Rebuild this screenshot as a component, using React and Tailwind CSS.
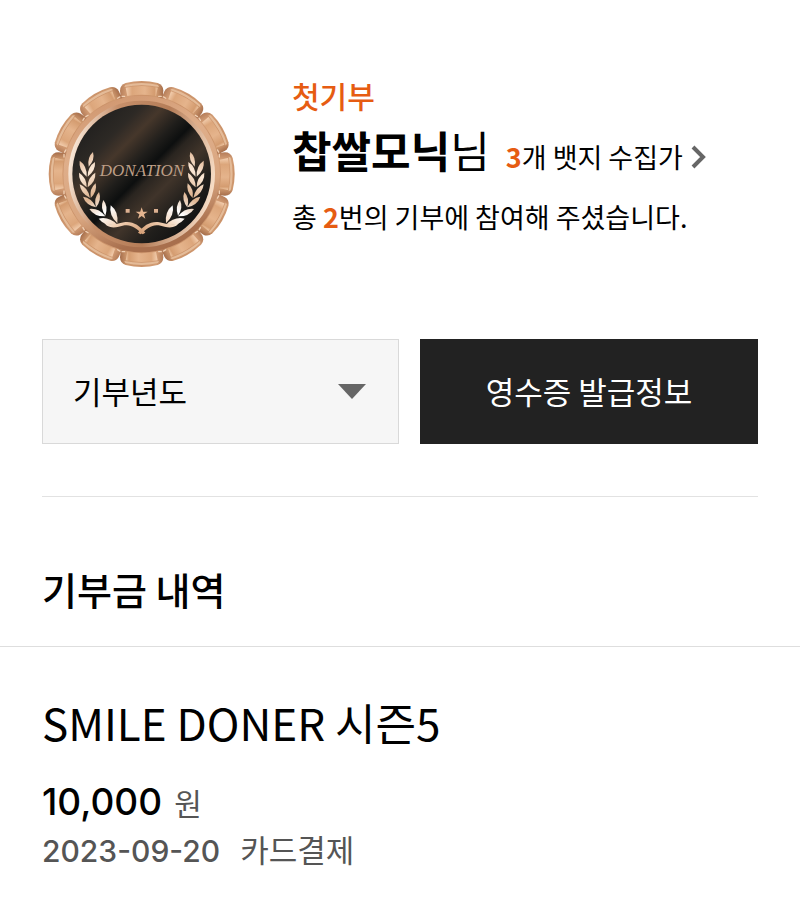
// App.jsx
import React from 'react';

// [base x, base y, tip x, tip y] for the left half of the laurel
const leaves = [
  [146, 290, 159, 246],
  [140, 320, 119, 272],
  [143, 320, 165, 276],
  [140, 352, 117, 308],
  [143, 352, 166, 308],
  [150, 384, 119, 343],
  [152, 384, 167, 340],
  [168, 412, 129, 380],
  [168, 412, 177, 366],
  [196, 439, 148, 417],
  [196, 437, 190, 390],
  [232, 464, 176, 446],
  [232, 460, 212, 406],
];

function leafPath([bx, by, tx, ty]) {
  const dx = tx - bx;
  const dy = ty - by;
  const mx = bx + dx * 0.55;
  const my = by + dy * 0.55;
  const nx = -dy * 0.28;
  const ny = dx * 0.28;
  return `M${bx} ${by}Q${mx + nx} ${my + ny} ${tx} ${ty}Q${mx - nx} ${my - ny} ${bx} ${by}Z`;
}

function Laurel() {
  return (
    <g fill="url(#leaf)">
      {leaves.map((leaf, i) => (
        <path key={i} d={leafPath(leaf)} />
      ))}
      <path d="M190 454C208 470 226 462 252 457C278 453 298 466 316 488L308 493C288 474 274 463 254 466C226 474 202 478 190 454Z" />
    </g>
  );
}

const angles = [0, 30, 60, 90, 120, 150, 180, 210, 240, 270, 300, 330];

function Badge() {
  return (
    <svg viewBox="24 24 564 576" className="w-[188px] h-[192px] shrink-0" role="img" aria-label="DONATION">
      <defs>
        <linearGradient id="lobe" x1="0" x2="1" y1="0" y2="0">
          <stop offset="0" stopColor="#b57d59" />
          <stop offset="0.16" stopColor="#d39d75" />
          <stop offset="0.5" stopColor="#cb9269" />
          <stop offset="0.84" stopColor="#cf996f" />
          <stop offset="1" stopColor="#a66e4b" />
        </linearGradient>
        <linearGradient id="panel" x1="0" x2="1" y1="0" y2="0">
          <stop offset="0" stopColor="#f3cfb0" />
          <stop offset="0.2" stopColor="#dca67b" />
          <stop offset="0.6" stopColor="#e5b48c" />
          <stop offset="0.9" stopColor="#d49c70" />
          <stop offset="1" stopColor="#efc8a5" />
        </linearGradient>
        <linearGradient id="rim" x1="0" x2="0.3" y1="0" y2="1">
          <stop offset="0" stopColor="#cc9169" />
          <stop offset="0.4" stopColor="#dfae8a" />
          <stop offset="0.75" stopColor="#d9a680" />
          <stop offset="1" stopColor="#a86f4d" />
        </linearGradient>
        <linearGradient id="bevel" x1="0" x2="1" y1="0.4" y2="0.6">
          <stop offset="0" stopColor="#f7e5d5" />
          <stop offset="0.25" stopColor="#c68f6a" />
          <stop offset="0.6" stopColor="#b57d58" />
          <stop offset="1" stopColor="#f6dcc5" />
        </linearGradient>
        <linearGradient id="face" gradientUnits="userSpaceOnUse" x1="163" y1="168" x2="451" y2="456">
          <stop offset="0" stopColor="#242220" />
          <stop offset="0.14" stopColor="#2d2925" />
          <stop offset="0.26" stopColor="#46372b" />
          <stop offset="0.4" stopColor="#211f1c" />
          <stop offset="0.5" stopColor="#0d0f0f" />
          <stop offset="0.56" stopColor="#2a2520" />
          <stop offset="0.68" stopColor="#40342a" />
          <stop offset="0.85" stopColor="#211f1c" />
          <stop offset="1" stopColor="#141414" />
        </linearGradient>
        <linearGradient id="leaf" gradientUnits="userSpaceOnUse" x1="120" y1="250" x2="300" y2="490">
          <stop offset="0" stopColor="#d9aa86" />
          <stop offset="0.2" stopColor="#fbe8d6" />
          <stop offset="0.42" stopColor="#deb38f" />
          <stop offset="0.62" stopColor="#ffffff" />
          <stop offset="0.8" stopColor="#efcdb0" />
          <stop offset="1" stopColor="#d6a27a" />
        </linearGradient>
      </defs>
      <circle cx="305" cy="312" r="246" fill="#a97350" />
      {angles.map((a) => (
        <g key={a} transform={`rotate(${a} 305 312)`}>
          <path
            d="M243 92L240 62Q240 45 257 39Q305 27 353 39Q370 45 370 62L367 92Z"
            fill="url(#lobe)"
          />
          <path d="M256 45Q305 33 354 45L357 51Q305 41 253 51Z" fill="#e4bb98" />
          <path d="M257 53Q305 43 353 53L348 78Q305 71 262 78Z" fill="url(#panel)" />
          <path d="M246 79L254 79M356 79L364 79" stroke="#f0d0b4" strokeWidth="4" strokeLinecap="round" />
        </g>
      ))}
      <circle cx="305" cy="312" r="235" fill="url(#rim)" />
      <circle cx="305" cy="312" r="213" fill="none" stroke="url(#bevel)" strokeWidth="14" />
      <circle cx="305" cy="312" r="208" fill="url(#face)" />
      <Laurel />
      <g transform="translate(610 0) scale(-1 1)">
        <Laurel />
      </g>
      <text
        x="306"
        y="318"
        textAnchor="middle"
        className="font-['Liberation_Serif',serif] italic"
        fontSize="51"
        fill="#bd9e86"
      >
        DONATION
      </text>
      <path
        d="M305 412L309.500 425L323 425L312 433L316 446L305 438L294 446L298 433L287 425L300.500 425Z"
        fill="#e4b48f"
      />
      <path d="M257 417h12v11h-12zM342 417h12v11h-12z" fill="#dcb090" />
    </svg>
  );
}

export default function App() {
  return (
    <div className="bg-white text-black font-['Noto_Sans_CJK_KR',sans-serif] pb-7">
      <header className="flex items-start gap-14 px-12 pt-[78px]">
        <Badge />
        <div>
          <p className="text-[30px] leading-[34px] font-medium text-[#e65c12]">첫기부</p>
          <div className="flex items-baseline gap-4 leading-[74px]">
            <h1 className="text-[43px]">
              <strong className="font-bold">찹쌀모닉</strong>님
            </h1>
            <a href="#badges" className="flex items-center gap-2 text-[27px]">
              <span>
                <strong className="font-bold text-[#e65c12]">3</strong>개 뱃지 수집가
              </span>
              <svg viewBox="0 0 16 24" className="w-4 h-6" fill="none" stroke="#666" strokeWidth="4">
                <path d="M2 2L12 12L2 22" />
              </svg>
            </a>
          </div>
          <p className="text-[27px] leading-[46px]">
            총 <strong className="font-bold text-[#e65c12]">2</strong>번의 기부에 참여해 주셨습니다.
          </p>
        </div>
      </header>

      <section className="mx-[42px] mt-[69px] pb-[52px] border-b border-[#e2e2e2] grid grid-cols-[357fr_338fr] gap-[21px]">
        <div className="grid items-center">
          <select
            aria-label="기부년도"
            className="col-start-1 row-start-1 w-full h-[105px] appearance-none rounded-none border border-[#d9d9d9] bg-[#f6f6f6] px-[30px] text-[31px]"
          >
            <option>기부년도</option>
          </select>
          <svg viewBox="0 0 28 15" className="col-start-1 row-start-1 justify-self-end w-7 h-[15px] mr-[33px] pointer-events-none" fill="#666">
            <path d="M0 0H28L14 15Z" />
          </svg>
        </div>
        <button type="button" className="h-[105px] bg-[#222] text-white text-[31px]">
          영수증 발급정보
        </button>
      </section>

      <h2 className="px-[42px] pt-[62px] pb-[27px] text-[38px] leading-[60px] font-medium border-b border-[#dedede]">
        기부금 내역
      </h2>

      <article className="px-[42px] pt-[44px]">
        <h3 className="text-[44px] leading-[62px]">SMILE DONER 시즌5</h3>
        <p className="mt-[26px] flex items-baseline gap-3 leading-[46px]">
          <span className="font-['Inter',sans-serif] font-medium text-[37px]">10,000</span>
          <span className="text-[30px] text-[#555]">원</span>
        </p>
        <p className="flex items-baseline gap-5 leading-[48px] text-[#555]">
          <time dateTime="2023-09-20" className="font-['Inter',sans-serif] font-medium text-[30px]">
            2023-09-20
          </time>
          <span className="text-[31px]">카드결제</span>
        </p>
      </article>
    </div>
  );
}
